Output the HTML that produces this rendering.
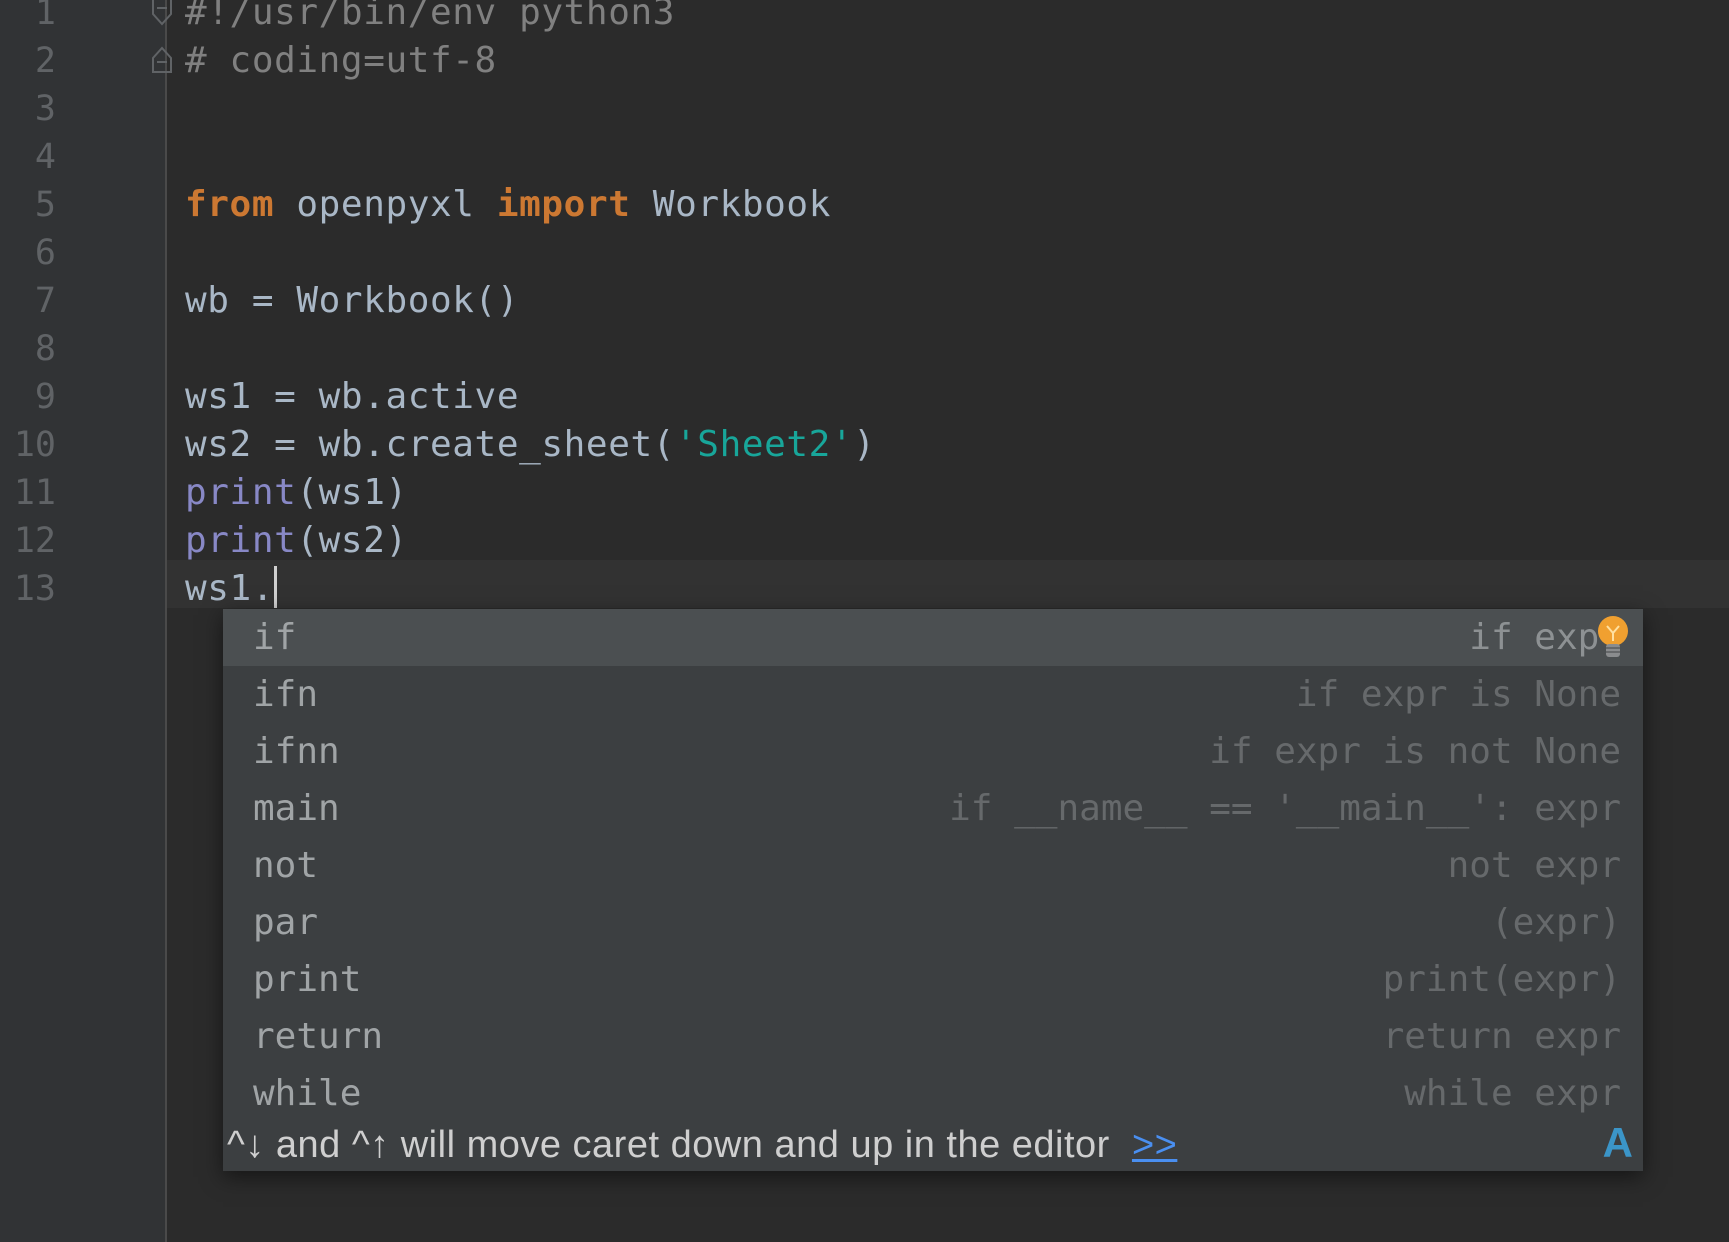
<!DOCTYPE html>
<html><head><meta charset="utf-8"><style>
html,body{margin:0;padding:0;width:1729px;height:1242px;overflow:hidden;background:#2b2b2b;}
body{position:relative;font-family:"DejaVu Sans Mono","Liberation Mono",monospace;}
.gut{position:absolute;left:0;top:0;width:165px;height:1242px;background:#313335;}
.gl{position:absolute;left:165px;top:0;width:2px;height:1242px;background:#4a4a4a;}
.cur{position:absolute;left:167px;top:560px;width:1562px;height:48px;background:#323232;}
.ln{position:absolute;left:0;width:56px;text-align:right;color:#606366;font-size:35px;line-height:48px;}
.code{position:absolute;left:185px;font-size:36px;line-height:48px;color:#a9b7c6;white-space:pre;letter-spacing:0.6px;}
.k{color:#cc7832;font-weight:bold}
.p{color:#8888c6}
.s{color:#18a69a}
.c{color:#808080}
.caret{display:inline-block;width:3px;height:42px;background:#d0d0d0;vertical-align:-8px;}
.pop{position:absolute;left:223px;top:609px;width:1420px;height:562px;background:#3c3f41;box-shadow:0 6px 20px rgba(0,0,0,.5);}
.row{position:absolute;left:0;width:1420px;height:57px;font-size:36px;line-height:57px;}
.row .a{position:absolute;left:30px;color:#a0a4a6;white-space:pre;}
.row .b{position:absolute;right:22px;color:#66696b;white-space:pre;}
.sel{background:#4b4f51;}
.sel .b{color:#8d9193}
.foot{position:absolute;left:4px;top:513px;font-family:"Liberation Sans",sans-serif;font-size:38px;color:#cfcfcf;line-height:46px;letter-spacing:0.5px;white-space:nowrap;}
.foot u{color:#4a8ff0;}
.A{position:absolute;right:10px;top:511px;font-family:"Liberation Sans",sans-serif;font-size:42px;font-weight:bold;color:#3b95c8;line-height:46px;}
</style></head><body>
<div class="gut"></div><div class="gl"></div><div class="cur"></div>
<div class="ln" style="top:-11px">1</div>
<div class="ln" style="top:37px">2</div>
<div class="ln" style="top:85px">3</div>
<div class="ln" style="top:133px">4</div>
<div class="ln" style="top:181px">5</div>
<div class="ln" style="top:229px">6</div>
<div class="ln" style="top:277px">7</div>
<div class="ln" style="top:325px">8</div>
<div class="ln" style="top:373px">9</div>
<div class="ln" style="top:421px">10</div>
<div class="ln" style="top:469px">11</div>
<div class="ln" style="top:517px">12</div>
<div class="ln" style="top:565px">13</div>
<svg style="position:absolute;left:150px;top:0" width="30" height="80"><path d="M3 0 V14 L12 24 L21 14 V0" fill="none" stroke="#606366" stroke-width="2"/><path d="M3 72 V58 L12 48 L21 58 V72 Z" fill="none" stroke="#606366" stroke-width="2"/><line x1="7" y1="62" x2="17" y2="62" stroke="#606366" stroke-width="2"/><line x1="7" y1="8" x2="17" y2="8" stroke="#606366" stroke-width="2"/></svg>
<div class="code c" style="top:-11px">#!/usr/bin/env python3</div>
<div class="code c" style="top:37px"># coding=utf-8</div>
<div class="code" style="top:181px"><span class="k">from</span> openpyxl <span class="k">import</span> Workbook</div>
<div class="code" style="top:277px">wb = Workbook()</div>
<div class="code" style="top:373px">ws1 = wb.active</div>
<div class="code" style="top:421px">ws2 = wb.create_sheet(<span class="s">'Sheet2'</span>)</div>
<div class="code" style="top:469px"><span class="p">print</span>(ws1)</div>
<div class="code" style="top:517px"><span class="p">print</span>(ws2)</div>
<div class="code" style="top:565px">ws1.<span class="caret"></span></div>
<div class="pop">
<div class="row sel" style="top:0"><span class="a">if</span><span class="b">if exp </span></div>
<div class="row" style="top:57px"><span class="a">ifn</span><span class="b">if expr is None</span></div>
<div class="row" style="top:114px"><span class="a">ifnn</span><span class="b">if expr is not None</span></div>
<div class="row" style="top:171px"><span class="a">main</span><span class="b">if __name__ == '__main__': expr</span></div>
<div class="row" style="top:228px"><span class="a">not</span><span class="b">not expr</span></div>
<div class="row" style="top:285px"><span class="a">par</span><span class="b">(expr)</span></div>
<div class="row" style="top:342px"><span class="a">print</span><span class="b">print(expr)</span></div>
<div class="row" style="top:399px"><span class="a">return</span><span class="b">return expr</span></div>
<div class="row" style="top:456px"><span class="a">while</span><span class="b">while expr</span></div>
<div class="foot">^↓ and ^↑ will move caret down and up in the editor &nbsp;<u>&gt;&gt;</u></div>
<div class="A">A</div>
<svg style="position:absolute;left:1372px;top:5px" width="36" height="50"><circle cx="18" cy="17" r="15" fill="#f0a030"/><path d="M12 12 L18 19 L24 12 M18 19 V27" stroke="#ffe0a0" stroke-width="2" fill="none"/><rect x="11" y="30" width="14" height="13" rx="3" fill="#8a8c8e"/><line x1="11" y1="34" x2="25" y2="34" stroke="#5a5c5e" stroke-width="1.5"/><line x1="11" y1="38" x2="25" y2="38" stroke="#5a5c5e" stroke-width="1.5"/></svg>
</div>
</body></html>
